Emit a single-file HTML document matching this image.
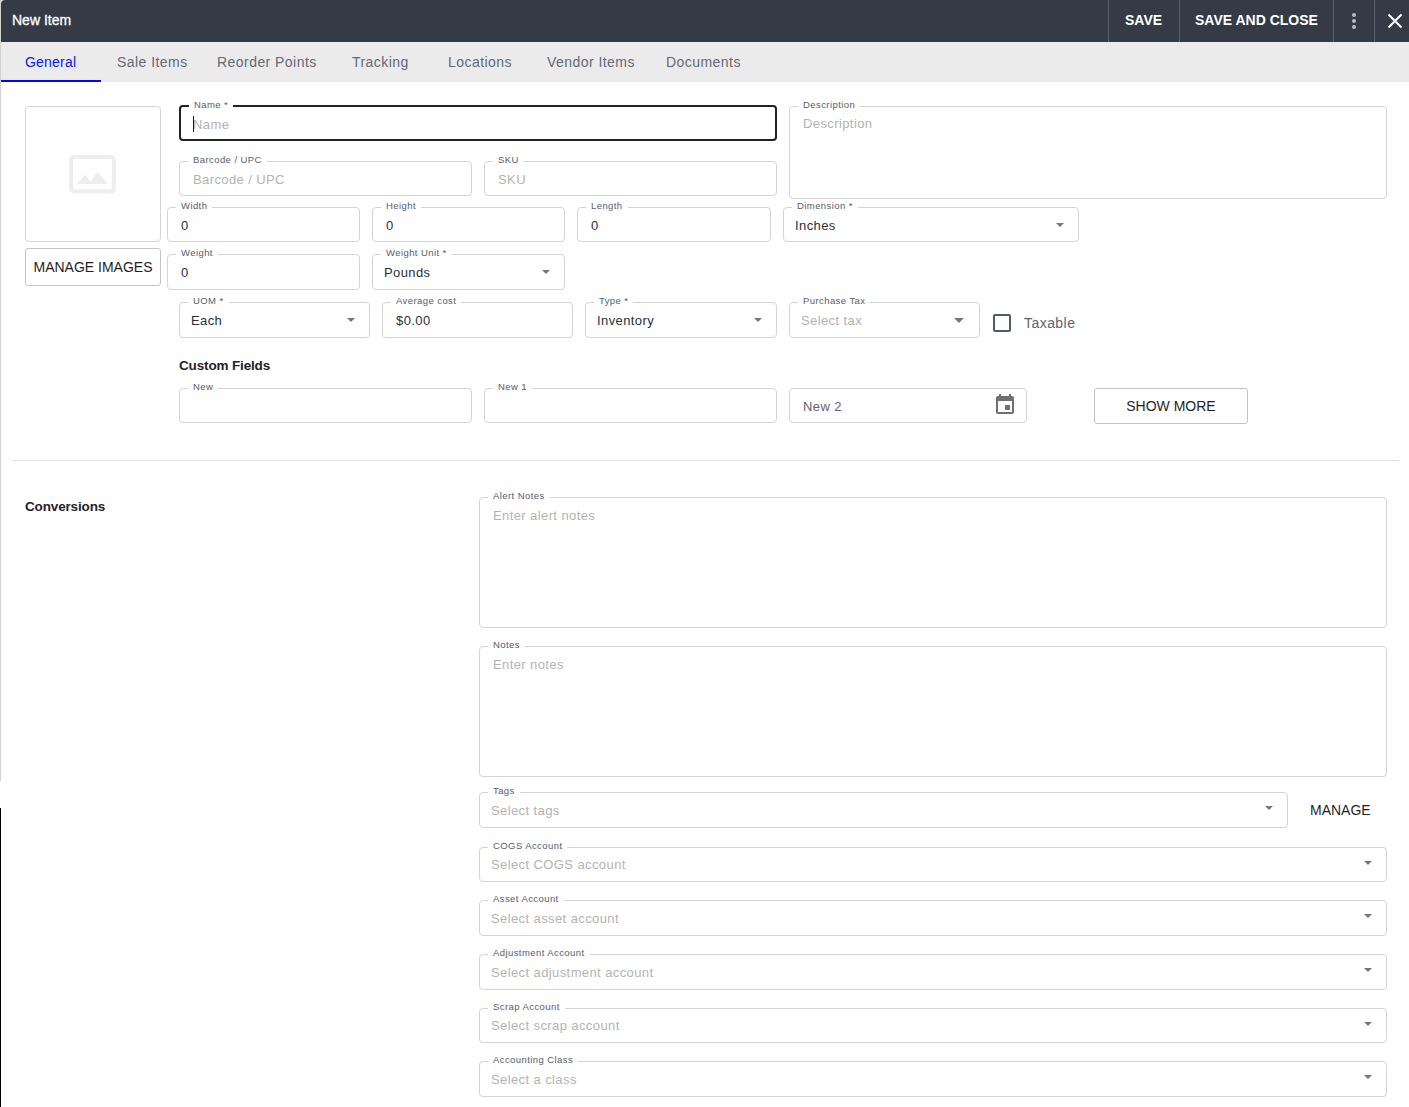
<!DOCTYPE html>
<html><head><meta charset="utf-8">
<style>
*{box-sizing:border-box}
html,body{margin:0;padding:0}
body{width:1409px;height:1107px;position:relative;overflow:hidden;background:#fff;font-family:"Liberation Sans",sans-serif;color:#1f2937}
.a{position:absolute}
#lb1{left:0;top:0;width:1px;height:781px;background:#d2d2d2}
#lb2{left:0;top:808px;width:1px;height:299px;background:#000}
#hdr{left:1px;top:0;width:1408px;height:42px;background:#353b46;border-top-left-radius:4px}
.ht{color:#fff;font-size:14px;line-height:16px;white-space:nowrap}
.sep{top:0;width:1px;height:42px;background:#5b6069}
#tabs{left:1px;top:42px;width:1408px;height:40px;background:#ebebeb}
.tab{top:54px;font-size:14px;line-height:16px;color:#636a76;white-space:nowrap;letter-spacing:.45px}
#ul{left:1px;top:80px;width:100px;height:2px;background:#0505ee}
.f{position:absolute;border:1px solid #d4d4d4;border-radius:4px;height:35px}
.lb{position:absolute;left:8px;top:-8.5px;font-size:9.5px;line-height:12px;color:#565d6a;background:#fff;padding:0 5px;white-space:nowrap;letter-spacing:.42px}
.v{position:absolute;left:13px;top:10px;font-size:13px;line-height:15px;color:#2a2f3a;white-space:nowrap;letter-spacing:.4px}
.ph{color:#b3b3b3}
.dd{position:absolute;right:14px;top:15px;width:0;height:0;border-left:4.5px solid transparent;border-right:4.5px solid transparent;border-top:4.5px solid #777}
.lo .dd{top:13px}
.btn{position:absolute;border:1px solid #c4c4c4;border-radius:3px;font-size:14px;color:#1f1f1f;text-align:center;white-space:nowrap}
.hd{font-weight:bold;font-size:13.5px;line-height:15px;color:#1f2329;white-space:nowrap;letter-spacing:-.15px}
</style></head><body>
<div id="lb1" class="a"></div>
<div id="lb2" class="a"></div>
<div id="hdr" class="a"></div>
<div class="a ht" style="left:12px;top:12px;-webkit-text-stroke:.3px #fff">New Item</div>
<div class="a sep" style="left:1108px"></div>
<div class="a sep" style="left:1179px"></div>
<div class="a sep" style="left:1333px"></div>
<div class="a sep" style="left:1374px"></div>
<div class="a ht" style="left:1125px;top:12px;font-weight:bold">SAVE</div>
<div class="a ht" style="left:1195px;top:12px;font-weight:bold">SAVE AND CLOSE</div>
<svg class="a" style="left:1348px;top:10px" width="12" height="22" viewBox="0 0 12 22"><circle cx="6" cy="5" r="2" fill="#b9bbbe"/><circle cx="6" cy="11" r="2" fill="#b9bbbe"/><circle cx="6" cy="17" r="2" fill="#b9bbbe"/></svg>
<svg class="a" style="left:1387px;top:13px" width="16" height="16" viewBox="0 0 16 16"><path d="M1.5 1.5L14.5 14.5M14.5 1.5L1.5 14.5" stroke="#fff" stroke-width="2"/></svg>

<div id="tabs" class="a"></div>
<div class="a tab" style="left:25px;color:#0c18f2;letter-spacing:.2px">General</div>
<div class="a tab" style="left:117px">Sale Items</div>
<div class="a tab" style="left:217px">Reorder Points</div>
<div class="a tab" style="left:352px">Tracking</div>
<div class="a tab" style="left:448px">Locations</div>
<div class="a tab" style="left:547px">Vendor Items</div>
<div class="a tab" style="left:666px">Documents</div>
<div id="ul" class="a"></div>

<!-- image box -->
<div class="f" style="left:25px;top:106px;width:136px;height:136px"></div>
<svg class="a" style="left:69px;top:155px" width="47" height="39" viewBox="0 0 47 39"><rect x="2.1" y="2" width="42.8" height="34.3" rx="3" fill="none" stroke="#eeeeee" stroke-width="4.2"/><path d="M8 29L16 19.5L21.5 27L28.5 16.8L39 29Z" fill="#eeeeee"/></svg>
<div class="btn" style="left:25px;top:248px;width:136px;height:38px;line-height:36px">MANAGE IMAGES</div>

<!-- row 1 -->
<div class="f" style="left:179px;top:105px;width:598px;height:36px;border:2px solid #222">
  <div class="lb" style="left:8px;top:-8px">Name *</div>
  <div class="v ph" style="left:12px;top:10px">Name</div>
  <div class="a" style="left:12px;top:9px;width:1px;height:16px;background:#111827"></div>
</div>
<div class="f" style="left:789px;top:106px;width:598px;height:93px">
  <div class="lb">Description</div>
  <div class="v ph" style="top:9px">Description</div>
</div>

<!-- row 2 -->
<div class="f" style="left:179px;top:161px;width:293px">
  <div class="lb">Barcode / UPC</div>
  <div class="v ph">Barcode / UPC</div>
</div>
<div class="f" style="left:484px;top:161px;width:293px">
  <div class="lb">SKU</div>
  <div class="v ph">SKU</div>
</div>

<!-- row 3 -->
<div class="f" style="left:167px;top:207px;width:193px">
  <div class="lb">Width</div>
  <div class="v">0</div>
</div>
<div class="f" style="left:372px;top:207px;width:193px">
  <div class="lb">Height</div>
  <div class="v">0</div>
</div>
<div class="f" style="left:577px;top:207px;width:194px">
  <div class="lb">Length</div>
  <div class="v">0</div>
</div>
<div class="f" style="left:783px;top:207px;width:296px">
  <div class="lb">Dimension *</div>
  <div class="v" style="left:11px">Inches</div>
  <div class="dd"></div>
</div>

<!-- row 4 -->
<div class="f" style="left:167px;top:254px;width:193px;height:36px">
  <div class="lb">Weight</div>
  <div class="v">0</div>
</div>
<div class="f" style="left:372px;top:254px;width:193px;height:36px">
  <div class="lb">Weight Unit *</div>
  <div class="v" style="left:11px">Pounds</div>
  <div class="dd"></div>
</div>

<!-- row 5 -->
<div class="f" style="left:179px;top:302px;width:191px;height:36px">
  <div class="lb">UOM *</div>
  <div class="v" style="left:11px">Each</div>
  <div class="dd"></div>
</div>
<div class="f" style="left:382px;top:302px;width:191px;height:36px">
  <div class="lb">Average cost</div>
  <div class="v">$0.00</div>
</div>
<div class="f" style="left:585px;top:302px;width:192px;height:36px">
  <div class="lb">Type *</div>
  <div class="v" style="left:11px">Inventory</div>
  <div class="dd"></div>
</div>
<div class="f" style="left:789px;top:302px;width:191px;height:36px">
  <div class="lb">Purchase Tax</div>
  <div class="v ph" style="left:11px">Select tax</div>
  <div class="dd" style="right:15px;top:15px;border-left-width:5px;border-right-width:5px;border-top-width:5px"></div>
</div>
<div class="a" style="left:993px;top:314px;width:18px;height:18px;border:2px solid #4f5c6b;border-radius:2px"></div>
<div class="a" style="left:1024px;top:315px;font-size:14px;line-height:16px;color:#5d6470;letter-spacing:.45px">Taxable</div>

<div class="a hd" style="left:179px;top:358px">Custom Fields</div>

<!-- row 6 -->
<div class="f" style="left:179px;top:388px;width:293px">
  <div class="lb">New</div>
</div>
<div class="f" style="left:484px;top:388px;width:293px">
  <div class="lb">New 1</div>
</div>
<div class="f" style="left:789px;top:388px;width:238px">
  <div class="v" style="color:#5d6470">New 2</div>
  <svg class="a" style="left:203px;top:4px" width="24" height="24" viewBox="0 0 24 24"><path fill="#707070" d="M17 12h-5v5h5v-5zM16 1v2H8V1H6v2H5c-1.11 0-1.99.9-1.99 2L3 19c0 1.1.89 2 2 2h14c1.1 0 2-.9 2-2V5c0-1.1-.9-2-2-2h-1V1h-2zm3 18H5V8h14v11z"/></svg>
</div>
<div class="btn" style="left:1094px;top:388px;width:154px;height:36px;line-height:34px">SHOW MORE</div>

<div class="a" style="left:13px;top:460px;width:1386px;height:1px;background:#e0e0e0"></div>

<div class="a hd" style="left:25px;top:499px">Conversions</div>

<div class="f" style="left:479px;top:497px;width:908px;height:131px">
  <div class="lb">Alert Notes</div>
  <div class="v ph" style="top:10px">Enter alert notes</div>
</div>
<div class="f" style="left:479px;top:646px;width:908px;height:131px">
  <div class="lb">Notes</div>
  <div class="v ph" style="top:10px">Enter notes</div>
</div>
<div class="f lo" style="left:479px;top:792px;width:809px;height:36px">
  <div class="lb">Tags</div>
  <div class="v ph" style="left:11px;top:10px">Select tags</div>
  <div class="dd"></div>
</div>
<div class="a" style="left:1310px;top:802px;font-size:14px;line-height:16px;color:#1f1f1f">MANAGE</div>
<div class="f lo" style="left:479px;top:847px;width:908px;height:35px">
  <div class="lb">COGS Account</div>
  <div class="v ph" style="left:11px;top:9px">Select COGS account</div>
  <div class="dd"></div>
</div>
<div class="f lo" style="left:479px;top:900px;width:908px;height:36px">
  <div class="lb">Asset Account</div>
  <div class="v ph" style="left:11px">Select asset account</div>
  <div class="dd"></div>
</div>
<div class="f lo" style="left:479px;top:954px;width:908px;height:36px">
  <div class="lb">Adjustment Account</div>
  <div class="v ph" style="left:11px">Select adjustment account</div>
  <div class="dd"></div>
</div>
<div class="f lo" style="left:479px;top:1008px;width:908px;height:35px">
  <div class="lb">Scrap Account</div>
  <div class="v ph" style="left:11px;top:9px">Select scrap account</div>
  <div class="dd"></div>
</div>
<div class="f lo" style="left:479px;top:1061px;width:908px;height:36px">
  <div class="lb">Accounting Class</div>
  <div class="v ph" style="left:11px">Select a class</div>
  <div class="dd"></div>
</div>
</body></html>
